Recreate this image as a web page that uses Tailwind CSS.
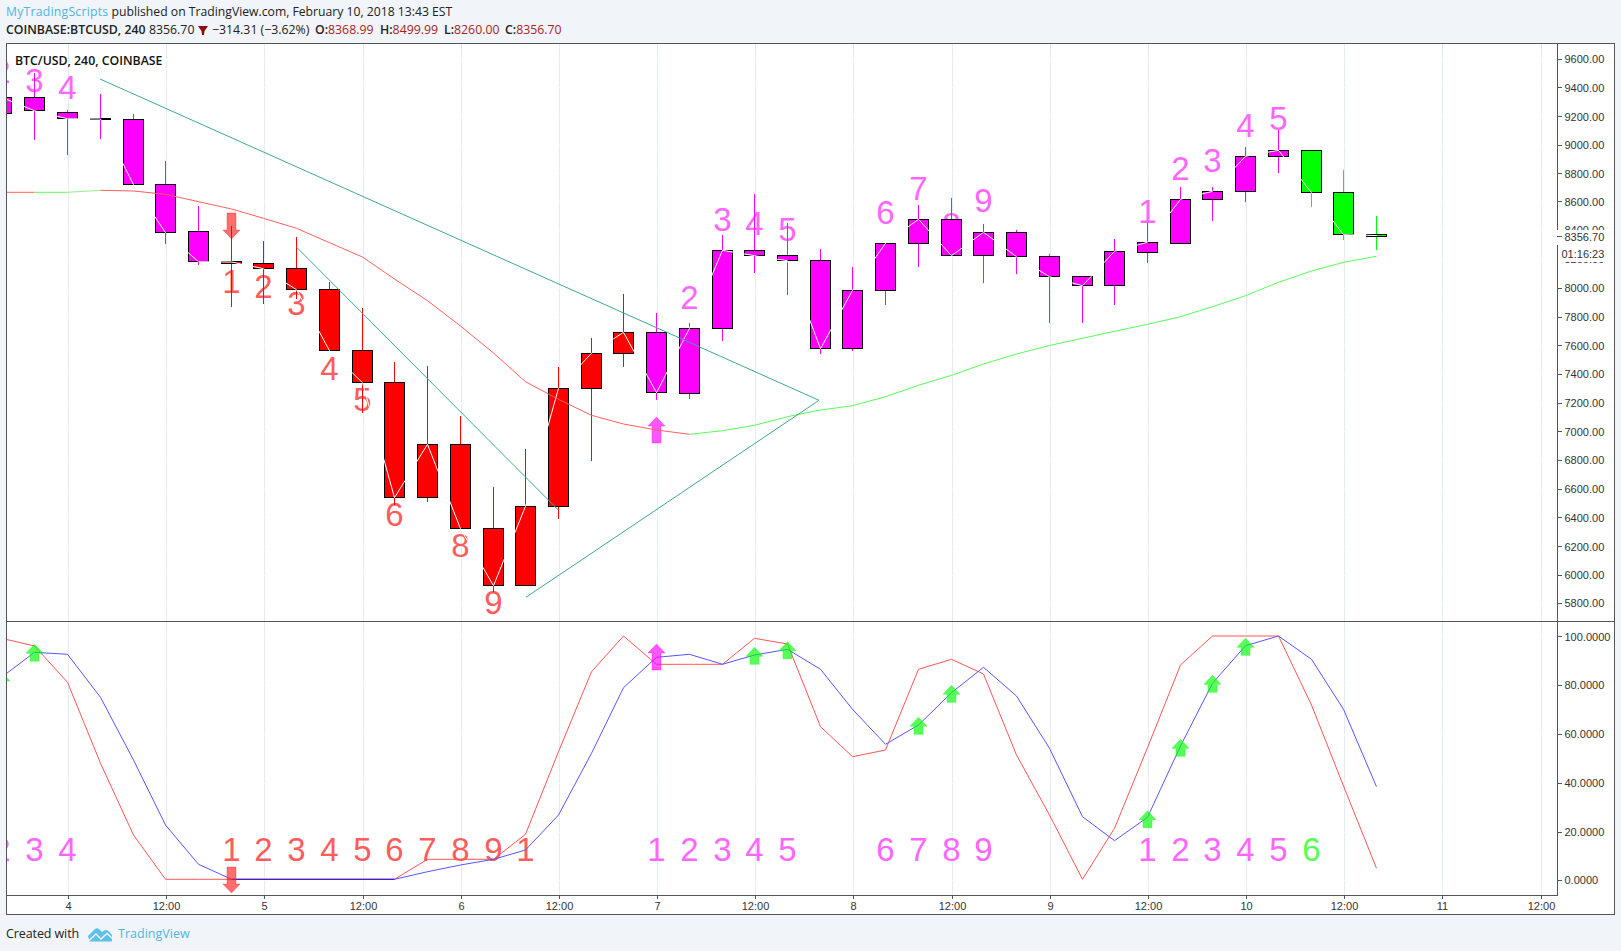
<!DOCTYPE html>
<html lang="en">
<head>
  <meta charset="UTF-8">
  <title>BTC/USD, 240, COINBASE</title>
  <script src="https://cdn.jsdelivr.net/npm/@tailwindcss/browser@4"></script>
</head>
<body class="bg-[#f1f4f8] text-[#222] w-[1621px] h-[951px] overflow-hidden font-['Open_Sans',sans-serif]">
  <!-- Title rows -->
  <header class="h-[43px] pl-[6px] pt-[3px]">
    <p class="h-[18px] text-[12.2px] leading-[18px] whitespace-nowrap">
      <a href="#" class="text-[#4db6e6] tracking-[0.25px]">MyTradingScripts</a> published on TradingView.com, February 10, 2018 13:43 EST
    </p>
    <div class="h-[18px] flex items-center text-[12.3px] leading-[18px] whitespace-nowrap">
      <span class="font-semibold w-[143px]">COINBASE:BTCUSD, 240</span>
      <span class="w-[49px]">8356.70</span>
      <svg class="w-[10px] h-[9px] mr-[4px]" viewBox="0 0 10 9"><polygon points="0,0 10,0 6.500,5 6,9 4,9 3.500,5" fill="#8b0f0f"/></svg>
      <span class="w-[103px]">−314.31 (−3.62%)</span>
      <span class="font-semibold w-[65px]">O:<span class="font-normal text-[#a81e1e]">8368.99</span></span>
      <span class="font-semibold w-[64px]">H:<span class="font-normal text-[#a81e1e]">8499.99</span></span>
      <span class="font-semibold w-[61px]">L:<span class="font-normal text-[#a81e1e]">8260.00</span></span>
      <span class="font-semibold">C:<span class="font-normal text-[#a81e1e]">8356.70</span></span>
    </div>
  </header>

  <!-- Chart box -->
  <main class="ml-[6px] w-[1609px] h-[872px] border border-[#555] bg-white flex flex-col">
    <div class="relative flex h-[577px] shrink-0">
      <svg id="price" class="block w-[1550px] h-[577px]" viewBox="7 44 1550 577"></svg>
      <svg id="price-axis" class="block w-[57px] h-[577px]" viewBox="1557 44 57 577"></svg>
      <span class="absolute left-[8px] top-[9px] text-[12.3px] leading-[16px] font-semibold text-[#111] whitespace-nowrap">BTC/USD, 240, COINBASE</span>
    </div>
    <div class="h-px bg-[#555] shrink-0"></div>
    <div class="flex h-[273px] shrink-0">
      <svg id="stoch" class="block w-[1550px] h-[273px]" viewBox="7 622 1550 273"></svg>
      <svg id="stoch-axis" class="block w-[57px] h-[273px]" viewBox="1557 622 57 273"></svg>
    </div>
    <svg id="time" class="block w-[1551px] h-[19px] border-t border-[#555]" viewBox="7 896 1551 18"></svg>
  </main>

  <!-- Footer -->
  <footer class="pl-[6px] h-[38px] flex items-center text-[12.5px] whitespace-nowrap">
    <span class="tracking-[-0.1px]">Created with</span>
    <svg class="w-[24px] h-[15px] ml-[9px]" viewBox="0 0 24 15">
      <path d="M0 9 L6 3 Q8 0 11 2 L14 5 L16 3.5 Q18.500 2 21 4.500 L24 8 L24 10 L19 5.500 L13 11 L8 6 L1 12.500 Z" fill="#5cc1ea"/>
      <path d="M1 14.500 L8 8 L13 13 L19 7.500 L24 12 L24 14.500 Z" fill="#5cc1ea"/>
    </svg>
    <a href="#" class="ml-[6px] text-[#4db6e6]">TradingView</a>
  </footer>

  <script>
    // [x, wick top, body top, body bottom, wick bottom, close, colour]
    const M = '#ff00ff', R = '#ff0000', G = '#00ff00';
    const candles = [
      [1, 80, 97.3, 113.3, 120, 97.3, M],
      [34, 73.3, 97.3, 110.7, 140, 110.7, M],
      [67, 110, 112.3, 118.7, 155, 118.7, M],
      [100, 93.7, 118.7, 119.7, 139, 119, M],
      [133, 114, 119.3, 184.7, 184.7, 184.7, M],
      [165, 161, 184.3, 232.7, 243.7, 232.7, M],
      [198, 206, 231.3, 261.7, 265, 261.7, M],
      [231, 225.7, 261, 263.7, 306.7, 262, R],
      [263, 241, 263.3, 268.7, 303.7, 268.7, R],
      [296, 237, 268.3, 289.7, 299, 289.7, R],
      [329, 282, 289.3, 350.7, 350.7, 350.7, R],
      [362, 308, 350.3, 382.7, 412.7, 382.7, R],
      [394, 362, 382.3, 497.7, 505, 497.7, R],
      [427, 366, 444.3, 497.7, 501.7, 444.3, R],
      [460, 416, 444.3, 528.7, 528.7, 528.7, R],
      [493, 487, 528.3, 585.7, 592, 585.7, R],
      [525, 449, 506.3, 585.7, 585.7, 506.3, R],
      [558, 367, 388.3, 506.7, 519, 388.3, R],
      [591, 338, 353.3, 388.7, 461, 353.3, R],
      [623, 294, 332.3, 353.7, 367, 332.3, R],
      [656, 313, 332.3, 392.7, 400, 392.7, M],
      [689, 323, 328.3, 393.7, 399, 328.3, M],
      [722, 235, 250.3, 328.7, 341, 250.3, M],
      [754, 194, 250.3, 255.7, 273, 255.7, M],
      [787, 223, 255.3, 260.7, 295, 260.7, M],
      [820, 249, 260.3, 348.7, 353.7, 348.7, M],
      [852, 267, 290.3, 348.7, 351, 290.3, M],
      [885, 243.3, 243.3, 290.7, 305, 243.3, M],
      [918, 205, 219.3, 243.7, 267, 219.3, M],
      [951, 198, 219.3, 255.7, 255.7, 255.7, M],
      [983, 224, 232.3, 255.7, 283, 232.3, M],
      [1016, 230, 232.3, 256.7, 274, 256.7, M],
      [1049, 254, 256.3, 276.7, 323, 276.7, M],
      [1082, 276.3, 276.3, 285.7, 323, 285.7, M],
      [1114, 239, 251.3, 285.7, 305, 251.3, M],
      [1147, 223, 242.3, 252.7, 263, 242.3, M],
      [1180, 187, 199.3, 243.7, 243.7, 199.3, M],
      [1212, 187, 191.3, 199.7, 221, 191.3, M],
      [1245, 147, 156.3, 191.7, 202, 156.3, M],
      [1278, 130, 150.3, 156.7, 173, 150.3, M],
      [1311, 149.500, 150.3, 192.7, 207, 192.7, G],
      [1343, 170, 192.3, 234.7, 240, 234.7, G],
      [1376, 216, 234.3, 236.7, 250, 235.5, G]
    ];
    const xs = candles.map(c => c[0] + 0.5);

    const grid = [68, 166, 264, 363, 461, 559, 657, 755, 853, 952, 1050, 1148, 1246, 1344, 1442, 1541];
    const gridLabels = ['4', '12:00', '5', '12:00', '6', '12:00', '7', '12:00', '8', '12:00', '9', '12:00', '10', '12:00', '11', '12:00'];
    const priceTicks = [[9600, 59], [9400, 87.7], [9200, 116.7], [9000, 145], [8800, 173.7], [8600, 201.7], [8400, 230.4], [8200, 259], [8000, 288.3], [7800, 317], [7600, 345.7], [7400, 374.4], [7200, 403], [7000, 431.7], [6800, 460.4], [6600, 489], [6400, 517.8], [6200, 546.5], [6000, 575], [5800, 603.3]];
    const stochTicks = [['100.0000', 636.7], ['80.0000', 685], ['60.0000', 734], ['40.0000', 783], ['20.0000', 832], ['0.0000', 880]];

    const pink = '#ff66ff', coral = '#ff5c5c', lime = '#55ff55';
    const FONT = "'Liberation Sans', Arial, sans-serif";

    function digit(i, d, y, color) {
      return `<text x="${xs[i]}" y="${y}" text-anchor="middle" font-family="${FONT}" font-size="33" fill="${color}">${d}</text>`;
    }
    function crispRect(x, y, w, h, fill) {
      return `<rect x="${x}" y="${y}" width="${w}" height="${h}" fill="${fill}" shape-rendering="crispEdges"/>`;
    }
    function vgrid(top, bottom, ticks) {
      let s = grid.map(x => crispRect(x, top, 1, bottom - top, '#e4edf4')).join('');
      s += ticks.map(t => crispRect(7, Math.floor(t), 1550, 1, '#fff')).join('');
      return s;
    }
    function poly(points, color, width) {
      return `<polyline points="${points.map(p => p.join(',')).join(' ')}" fill="none" stroke="${color}" stroke-width="${width || 1}" stroke-linejoin="round"/>`;
    }
    // arrow: tip at y, long arrows are 26px tall, short ones 17px
    function arrowUp(cx, y, h, color) {
      const p = `${cx},${y} ${cx + 8.5},${y + 9} ${cx + 4.5},${y + 9} ${cx + 4.5},${y + h} ${cx - 4.5},${y + h} ${cx - 4.5},${y + 9} ${cx - 8.5},${y + 9}`;
      return `<polygon points="${p}" fill="${color}" fill-opacity="0.65" stroke="${color}" stroke-opacity="0.35"/>`;
    }
    function arrowDown(cx, y, color) {
      const p = `${cx},${y + 26} ${cx + 8.5},${y + 17} ${cx + 4.5},${y + 17} ${cx + 4.5},${y} ${cx - 4.5},${y} ${cx - 4.5},${y + 17} ${cx - 8.5},${y + 17}`;
      return `<polygon points="${p}" fill="${color}" fill-opacity="0.65" stroke="${color}" stroke-opacity="0.35"/>`;
    }

    // ---- price pane ----
    const ma = [192.3, 192.3, 192.3, 190.3, 191, 194.3, 201.7, 209, 218.3, 228.3, 242.7, 257, 279, 300.7, 326, 353, 381.7, 399.3, 415.3, 424, 430, 434.3, 430.7, 425.3, 416.7, 410, 405.7, 396.7, 385.3, 375.3, 364, 354, 345.5, 338.3, 331.3, 324.3, 316.7, 306.7, 295.7, 282.3, 271, 262.3, 256.3];
    const maLine = ma.map((y, i) => [xs[i], y]);

    let price = vgrid(44, 621, priceTicks.map(t => t[1]));

    // numbers sit behind the candles
    price += digit(0, '2', 83, pink) + digit(1, '3', 91.7, pink) + digit(2, '4', 99.3, pink);
    [[7, '1', 293], [8, '2', 298], [9, '3', 315], [10, '4', 380], [11, '5', 411], [12, '6', 526], [14, '8', 557], [15, '9', 614]]
      .forEach(d => price += digit(d[0], d[1], d[2], coral));
    [[21, '2', 309], [22, '3', 230.5], [23, '4', 235], [24, '5', 241], [27, '6', 223.5], [28, '7', 200], [29, '8', 236], [30, '9', 212], [35, '1', 222.5], [36, '2', 180], [37, '3', 171.5], [38, '4', 137], [39, '5', 130]]
      .forEach(d => price += digit(d[0], d[1], d[2], pink));

    price += arrowDown(231.5, 213, '#ff2020');
    price += arrowUp(656.5, 417, 26, '#ff00ff');

    candles.forEach(c => {
      const [x, wt, bt, bb, wb, , color] = c;
      const top = Math.floor(bt) + 0.5, bottom = Math.floor(bb) + 0.5;
      price += crispRect(x, wt, 1, wb - wt, color);
      price += `<rect x="${x - 9.5}" y="${top}" width="20" height="${bottom - top}" fill="${color}" stroke="#000" shape-rendering="crispEdges"/>`;
    });

    // close line is white, so it only shows on the candle bodies
    price += poly(candles.map(c => [c[0] + 0.5, c[5]]), '#fff');

    price += poly(maLine.slice(0, 2), '#ff5f5f') + poly(maLine.slice(1, 3), '#55ff55') + poly(maLine.slice(2, 4), '#99ee88');
    price += poly(maLine.slice(3, 22), '#ff5f5f') + poly(maLine.slice(21), '#55ff55');

    price += poly([[100, 79], [819, 400.3]], '#3ea893') + poly([[819, 400.3], [526, 597.3]], '#3ea893') + poly([[296.7, 247.3], [558.3, 510]], '#3ea893');
    document.getElementById('price').innerHTML = price;

    // ---- price axis ----
    let pa = crispRect(1557, 44, 1, 577, '#555');
    priceTicks.forEach(t => {
      pa += crispRect(1557, Math.floor(t[1]), 5, 1, '#555');
      pa += `<text x="1564.500" y="${t[1] + 4}" font-family="${FONT}" font-size="11" fill="#333">${t[0]}.00</text>`;
    });
    pa += crispRect(1557, 230, 57, 15, '#fff') + crispRect(1558, 245, 56, 17, '#fff');
    pa += crispRect(1557, 236, 5, 1, '#555');
    pa += `<text x="1564.500" y="240.700" font-family="${FONT}" font-size="11" fill="#333">8356.70</text>`;
    pa += `<text x="1561.500" y="258" font-family="${FONT}" font-size="11" fill="#333">01:16:23</text>`;
    document.getElementById('price-axis').innerHTML = pa;

    // ---- stochastic pane ----
    const red = [638.3, 646, 682.3, 763.3, 835, 879.3, 879.3, 879.3, 879.3, 879.3, 879.3, 879.3, 879.3, 859.3, 859.3, 859.3, 834.3, 751.7, 671.7, 636, 664.3, 664.3, 664.3, 638.3, 644, 726.7, 756.7, 750, 669.3, 659.3, 674, 755, 815, 879.3, 828.3, 747.7, 665, 636, 636, 636, 705, 786, 868.3];
    const blue = [677.3, 652.3, 654.3, 697.3, 760, 825, 864.3, 879.3, 879.3, 879.3, 879.3, 879.3, 879.3, 871.7, 865, 859.3, 850, 815, 753.3, 687.7, 657.3, 654.3, 664.3, 655, 649.3, 669.3, 709.3, 744.3, 725, 692.7, 667.3, 696, 748.3, 816.7, 840.7, 817.3, 746, 683.3, 645.7, 636, 659.3, 709.3, 786.7];

    let st = vgrid(622, 895, stochTicks.map(t => t[1]));
    [[0, '2'], [1, '3'], [2, '4']].forEach(d => st += digit(d[0], d[1], 860.5, pink));
    ['1', '2', '3', '4', '5', '6', '7', '8', '9', '1'].forEach((d, n) => st += digit(7 + n, d, 860.5, coral));
    [[20, '1'], [21, '2'], [22, '3'], [23, '4'], [24, '5'], [27, '6'], [28, '7'], [29, '8'], [30, '9'], [35, '1'], [36, '2'], [37, '3'], [38, '4'], [39, '5']]
      .forEach(d => st += digit(d[0], d[1], 860.5, pink));
    st += digit(40, '6', 860.5, lime);

    st += poly(red.map((y, i) => [xs[i], y]), '#ff5555');
    st += poly(blue.map((y, i) => [xs[i], y]), '#5555ff');
    // flat stretch at the bottom, where both lines lie over each other
    st += poly([[xs[7], 879.3], [xs[12], 879.3]], '#3a12c0');

    [[0, 672], [1, 644.3], [23, 647.3], [24, 641.7], [28, 717.3], [29, 685.3], [35, 810.7], [36, 739.3], [37, 675.3], [38, 638.3]]
      .forEach(a => st += arrowUp(xs[a[0]], a[1], 17, '#00ff00'));
    st += arrowUp(656.5, 644, 26, '#ff00ff');
    st += arrowDown(231.5, 867, '#ff2020');
    document.getElementById('stoch').innerHTML = st;

    let sa = crispRect(1557, 622, 1, 273, '#555');
    stochTicks.forEach(t => {
      sa += crispRect(1557, Math.floor(t[1]), 5, 1, '#555');
      sa += `<text x="1564.500" y="${t[1] + 4}" font-family="${FONT}" font-size="11" fill="#333">${t[0]}</text>`;
    });
    document.getElementById('stoch-axis').innerHTML = sa;

    // ---- time axis ----
    let tm = '';
    grid.forEach((x, i) => {
      tm += crispRect(x, 896, 1, 3, '#555');
      tm += `<text x="${x + 0.5}" y="910" text-anchor="middle" font-family="${FONT}" font-size="11" fill="#333">${gridLabels[i]}</text>`;
    });
    document.getElementById('time').innerHTML = tm;
  </script>
</body>
</html>
